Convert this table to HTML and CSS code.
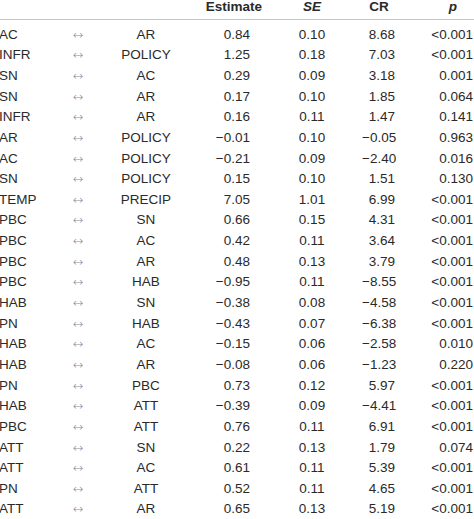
FILE: index.html
```html
<!DOCTYPE html>
<html>
<head>
<meta charset="utf-8">
<link rel="stylesheet" href="styles.css">
</head>
<body>
<div class="table">
  <div class="row head">
    <div class="c1"></div>
    <div class="c2"></div>
    <div class="c3"></div>
    <div class="c4">Estimate</div>
    <div class="c5"><i>SE</i></div>
    <div class="c6">CR</div>
    <div class="c7"><i>p</i></div>
  </div>
  <div class="body" id="body"></div>
</div>
<script src="script.js"></script>
</body>
</html>
```

FILE: script.js
```js
var rows = [
["AC","AR","0.84","0.10","8.68","<0.001"],
["INFR","POLICY","1.25","0.18","7.03","<0.001"],
["SN","AC","0.29","0.09","3.18","0.001"],
["SN","AR","0.17","0.10","1.85","0.064"],
["INFR","AR","0.16","0.11","1.47","0.141"],
["AR","POLICY","\u22120.01","0.10","\u22120.05","0.963"],
["AC","POLICY","\u22120.21","0.09","\u22122.40","0.016"],
["SN","POLICY","0.15","0.10","1.51","0.130"],
["TEMP","PRECIP","7.05","1.01","6.99","<0.001"],
["PBC","SN","0.66","0.15","4.31","<0.001"],
["PBC","AC","0.42","0.11","3.64","<0.001"],
["PBC","AR","0.48","0.13","3.79","<0.001"],
["PBC","HAB","\u22120.95","0.11","\u22128.55","<0.001"],
["HAB","SN","\u22120.38","0.08","\u22124.58","<0.001"],
["PN","HAB","\u22120.43","0.07","\u22126.38","<0.001"],
["HAB","AC","\u22120.15","0.06","\u22122.58","0.010"],
["HAB","AR","\u22120.08","0.06","\u22121.23","0.220"],
["PN","PBC","0.73","0.12","5.97","<0.001"],
["HAB","ATT","\u22120.39","0.09","\u22124.41","<0.001"],
["PBC","ATT","0.76","0.11","6.91","<0.001"],
["ATT","SN","0.22","0.13","1.79","0.074"],
["ATT","AC","0.61","0.11","5.39","<0.001"],
["PN","ATT","0.52","0.11","4.65","<0.001"],
["ATT","AR","0.65","0.13","5.19","<0.001"]
];
var body = document.getElementById("body");
rows.forEach(function (r) {
  var row = document.createElement("div");
  row.className = "row";
  var cells = [r[0], "\u2194", r[1], r[2], r[3], r[4], r[5]];
  cells.forEach(function (t, i) {
    var d = document.createElement("div");
    d.className = "c" + (i + 1);
    d.textContent = t;
    row.appendChild(d);
  });
  body.appendChild(row);
});
```

FILE: styles.css
```css
html, body {
  margin: 0;
  padding: 0;
  background: #ffffff;
}
body {
  font-family: "Liberation Sans", Arial, sans-serif;
  font-size: 13.5px;
  color: #2a2a2a;
  width: 474px;
  overflow: hidden;
}
.table {
  width: 474px;
}
.row {
  display: grid;
  grid-template-columns: 60px 36px 100px 66px 100px 48px 64px;
  height: 20.65px;
  line-height: 20.65px;
  white-space: nowrap;
}
.head {
  height: 19px;
  line-height: 14px;
  font-weight: bold;
  border-bottom: 1px solid #c4c4c4;
}
.body {
  padding-top: 4.7px;
}
.c1 { text-align: left; margin-left: -1px; }
.c2 {
  text-align: center;
  color: #8c8c8c;
  font-family: "DejaVu Sans", sans-serif;
  font-size: 12.5px;
  font-weight: 300;
}
.c3 { text-align: center; }
.c4 { text-align: right; padding-right: 12px; }
.c5 { text-align: center; }
.c6 { text-align: right; padding-right: 15px; }
.c7 { text-align: right; padding-right: 1px; }
.head .c4 { padding-right: 0; }
.head .c6 { text-align: center; padding-right: 14px; padding-left: 0; }
.head .c7 { text-align: right; padding-right: 17px; }
```
